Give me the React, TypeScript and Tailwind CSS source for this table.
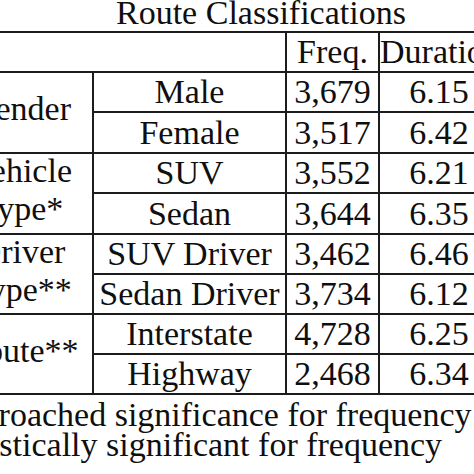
import React from "react";

interface Group {
  label: React.ReactNode;
  items: { name: string; freq: string; dur: string }[];
}

const groups: Group[] = [
  { label: "Gender", items: [{ name: "Male", freq: "3,679", dur: "6.15" }, { name: "Female", freq: "3,517", dur: "6.42" }] },
  { label: <>Vehicle<br />Type*</>, items: [{ name: "SUV", freq: "3,552", dur: "6.21" }, { name: "Sedan", freq: "3,644", dur: "6.35" }] },
  { label: <>Driver<br />Type**</>, items: [{ name: "SUV Driver", freq: "3,462", dur: "6.46" }, { name: "Sedan Driver", freq: "3,734", dur: "6.12" }] },
  { label: "Route**", items: [{ name: "Interstate", freq: "4,728", dur: "6.25" }, { name: "Highway", freq: "2,468", dur: "6.34" }] },
];

const cell = "flex items-center justify-center border-r-2 border-b-2 border-[#1c1c1c] leading-[38px] whitespace-nowrap";

export default function App() {
  return (
    <div className="h-[474px] w-[474px] overflow-hidden bg-white font-['Liberation_Serif','Times_New_Roman',serif] text-[34px] text-[#0f0f0f]">
      <div className="-ml-[52px] w-[552px]">
        <div className="pl-[168px] leading-[25px] whitespace-nowrap">Route Classifications</div>

        <div className="mt-[6px] grid grid-cols-[144px_193px_93px_120px] grid-rows-[40px_40px_41px_40px_41px_40px_40px_40px_40px] border-t-2 border-l-2 border-[#1c1c1c]">
          <div className={`${cell} col-span-2`} />
          <div className={cell}>Freq.</div>
          <div className={`${cell} justify-start`}>Duration</div>

          {groups.map((g, gi) => (
            <React.Fragment key={gi}>
              <div className={`${cell} row-span-2 pb-[7px] text-center`}>
                <div>{g.label}</div>
              </div>
              {g.items.map((it, i) => (
                <React.Fragment key={i}>
                  <div className={`${cell} ${i === 1 ? "col-start-2" : ""}`}>{it.name}</div>
                  <div className={cell}>{it.freq}</div>
                  <div className={cell}>{it.dur}</div>
                </React.Fragment>
              ))}
            </React.Fragment>
          ))}
        </div>

        <div className="mt-[5px] leading-[30px] whitespace-nowrap">
          <div className="-ml-[25px]">*Approached significance for frequency</div>
          <div className="-ml-[45px]">**Statistically significant for frequency</div>
        </div>
      </div>
    </div>
  );
}
